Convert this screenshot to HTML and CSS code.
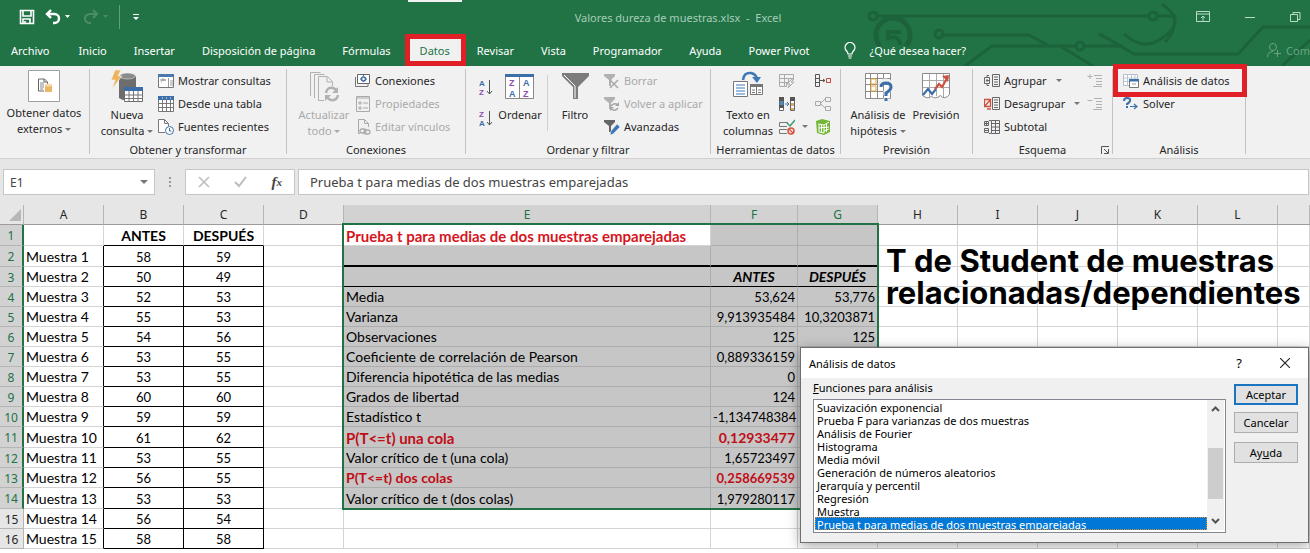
FILE: index.html
```html
<!doctype html>
<html lang="es">
  <head>
    <meta charset="UTF-8" />
    <meta name="viewport" content="width=device-width, initial-scale=1.0" />
    <title>Valores dureza de muestras.xlsx - Excel</title>
    <link rel="stylesheet" href="styles.css">
  </head>
  <body>
    <header class="top">
      <svg class="circuit" viewBox="0 0 450 66" width="450" height="66" fill="none" stroke="#1c633b" stroke-width="3">
        <path d="M17 16H289M297 16h18q0 18-10 26M81 35h88l22 12M105 66l27-20h85M223 46h38l-22-12M240 34l34 20h104l25-27h47M200 46l33 20M302 4q26 18 0 34-18 14-38-4M422 66l28-26" />
        <circle cx="13" cy="16" r="4" /><circle cx="293" cy="16" r="4" /><circle cx="79" cy="34" r="4" /><circle cx="220" cy="46" r="4" />
        <path d="M20 46a17 17 0 1 1 26 0" stroke-width="5" /><path d="M41 32H28v6q12-3 12 7" stroke-width="4" />
      </svg>
      <svg class="edge" viewBox="0 0 54 2" width="54" height="2"><path d="M0 0h54v2H0z" fill="#f1f1f1" /></svg>

      <div class="titlebar">
        <div class="quick">
          <button class="icon-btn" aria-label="Guardar"><svg width="16" height="16" viewBox="0 0 16 16" fill="none" stroke="#fff" stroke-width="1.6"><path d="M1.5 1.5h13v13h-13zM4 2v5h8V2M4 14v-4h7v4M6 14v-2" /></svg></button>
          <button class="icon-btn" aria-label="Deshacer"><svg width="27" height="16" viewBox="0 0 27 16" fill="none" stroke="#fff" stroke-width="2.4"><path d="M6 1L2 5l4 4M2.500 5h7a4.500 4.500 0 0 1 0 9H8" /><path d="M20 6h5l-2.500 3z" fill="#fff" stroke="none" /></svg></button>
          <button class="icon-btn" aria-label="Rehacer"><svg width="27" height="16" viewBox="0 0 27 16" fill="none" stroke="#4a8c66" stroke-width="2.200"><path d="M11 1l4 4-4 4M14.500 5h-7a4.500 4.500 0 0 0 0 9H9" /><path d="M21 6h5l-2.500 3z" fill="#4a8c66" stroke="none" /></svg></button>
          <span class="quick-line"></span>
          <button class="icon-btn" aria-label="Personalizar"><svg width="8" height="8" viewBox="0 0 8 8"><path d="M1 1h6v1H1zM1 4h6L4 7z" fill="#fff" /></svg></button>
        </div>
        <div class="doc-title">Valores dureza de muestras.xlsx &nbsp;-&nbsp; Excel</div>
        <div class="window-buttons">
          <button class="icon-btn" aria-label="Opciones de la cinta"><svg width="14" height="12" viewBox="0 0 14 12" fill="none" stroke="#b9dcc8"><path d="M.5.5h13v10H.5zM1 3h12M7 10V5M5 7l2-2 2 2" /></svg></button>
          <button class="icon-btn" aria-label="Minimizar"><svg width="12" height="12" viewBox="0 0 12 12"><path d="M1 6h10v1H1z" fill="#b9dcc8" /></svg></button>
          <button class="icon-btn" aria-label="Restaurar"><svg width="11" height="12" viewBox="0 0 11 12" fill="none" stroke="#b9dcc8"><path d="M.5 3.500h7v7h-7zM3 3V1.500h7v7H8" /></svg></button>
        </div>
      </div>

      <nav class="tabs">
        <a href="#" class="tab">Archivo</a>
        <a href="#" class="tab">Inicio</a>
        <a href="#" class="tab">Insertar</a>
        <a href="#" class="tab">Disposición de página</a>
        <a href="#" class="tab">Fórmulas</a>
        <a href="#" class="tab active">Datos</a>
        <a href="#" class="tab">Revisar</a>
        <a href="#" class="tab">Vista</a>
        <a href="#" class="tab">Programador</a>
        <a href="#" class="tab">Ayuda</a>
        <a href="#" class="tab">Power Pivot</a>
        <a href="#" class="tab tell-me"><svg width="12" height="17" viewBox="0 0 12 17" fill="none" stroke="#fff" stroke-width="1.200"><path d="M4 12c0-3-3-3-3-6.500a5 5 0 0 1 10 0C11 9 8 9 8 12zM4 14h4M4.500 16h3" /></svg>¿Qué desea hacer?</a>
        <a href="#" class="tab share"><svg width="14" height="14" viewBox="0 0 14 14" fill="none" stroke="#69a583"><circle cx="6" cy="4" r="3.500" /><path d="M.5 14q0-5 5.500-5.500M10.500 7v7M7 10.500h7" /></svg>Com</a>
      </nav>
    </header>

    <section class="ribbon">
      <div class="group group-external">
        <button class="big">
          <svg width="32" height="32" viewBox="0 0 32 32"><path d="M.5.5h31v31H.5z" fill="#fff" stroke="#a0a0a0" /><path d="M10.500 9h6l3 3v2M10.500 9v12H16M16 9v3h3" fill="none" stroke="#666" /><path d="M12 13h4M12 15h4M12 17h4M12 19h3" stroke="#888" /><path d="M17 15h7v7h-7z" fill="#eab765" /><ellipse cx="20.500" cy="15" rx="3.500" ry="1.500" fill="#f6dba9" /></svg>
          <span>Obtener datos<br>externos <i class="caret"></i></span>
        </button>
      </div>

      <div class="group group-transform">
        <div class="group-body">
          <button class="big">
            <svg width="32" height="34" viewBox="0 0 32 34"><path d="M8 6v22q4 3 9 2V17h8V6z" fill="#6d6d6d" /><ellipse cx="16.500" cy="6" rx="8" ry="3" fill="#8b8b8b" stroke="#f1f1f1" stroke-width=".5" /><path d="M4 0h6L7 6h4L1 19l3-9H0z" fill="#eeb35c" stroke="#f1f1f1" stroke-width=".7" /><path d="M13.500 17.500h18v14h-18z" fill="#fff" stroke="#6d6d6d" /><path d="M13 17h19v4H13z" fill="#3c6fa8" /><path d="M14 25h18M14 28.500h18M18 21v11M22.500 21v11M27 21v11" stroke="#777" /></svg>
            <span>Nueva<br>consulta <i class="caret"></i></span>
          </button>
          <div class="stack">
            <button class="cmd"><svg viewBox="0 0 16 16"><path d="M.5 1.500h15v13H.5z" fill="#fff" stroke="#777" /><path d="M0 1h16v3H0z" fill="#4a79ad" /><path d="M3 7h5M3 9h1M10.500 5v9M2 7h6M5 5v3M12 8h3M12 10h3M12 12h3" stroke="#999" /></svg>Mostrar consultas</button>
            <button class="cmd"><svg viewBox="0 0 16 16"><path d="M.5.5h15v15H.5z" fill="#fff" stroke="#777" /><path d="M0 0h16v4H0z" fill="#3c6fa8" /><path d="M1 7.500h15M1 11.500h15M4.500 4v12M8.500 4v12M12.500 4v12" stroke="#777" /><path d="M4 2h1M8 2h1M12 2h1" stroke="#fff" /></svg>Desde una tabla</button>
            <button class="cmd"><svg viewBox="0 0 16 16" fill="none" stroke="#777"><path d="M7 13.500H.5V.5h6l4 4V7M6.500.5v4h4" fill="#fff" /><circle cx="11.500" cy="11.500" r="4" fill="#fff" stroke="#3c6fa8" /><path d="M11.500 9v3h2" stroke="#3c6fa8" /></svg>Fuentes recientes</button>
          </div>
        </div>
        <div class="group-name">Obtener y transformar</div>
      </div>

      <div class="group group-connections">
        <div class="group-body">
          <button class="big" disabled>
            <svg width="32" height="34" viewBox="0 0 32 34" fill="none" stroke="#b1b1b1"><path d="M2.500 26V2.500h10M6.500 28V4.500h10M10.500 30.500V6.500h9l5 5V16M19 7v5h5M10.500 30.500H16" /><path d="M18 23q1-6 7-5 3 1 4 3M30 25q-1 6-7 5-3-1-4-3" stroke-width="2.500" /><path d="M30 17v6h-6zM17 31v-6h6z" fill="#b1b1b1" stroke="none" /></svg>
            <span>Actualizar<br>todo <i class="caret"></i></span>
          </button>
          <div class="stack">
            <button class="cmd"><svg viewBox="0 0 16 16"><path d="M2.500 1.500h12v9h-12z" fill="#fff" stroke="#666" /><path d="M.5 4v9.500H13V11" fill="none" stroke="#777" /><circle cx="8.500" cy="6" r="2" fill="none" stroke="#3c6fa8" stroke-width="1.500" /><path d="M8.500 2v8M5 6h7" stroke="#3c6fa8" stroke-dasharray="1 5" /></svg>Conexiones</button>
            <button class="cmd" disabled><svg viewBox="0 0 16 16" fill="none" stroke="#aaa"><path d="M1.500.500h13v15h-13zM1.500 2h13M4 6h2v2H4zM4 11h2v2H4zM8 7h5M8 12h5" /></svg>Propiedades</button>
            <button class="cmd" disabled><svg viewBox="0 0 16 16" fill="none" stroke="#aaa"><path d="M5 14.500H3.500V.5h6l4 4V8M9.500.5v4h4" /><rect x="5" y="10" width="6" height="4" rx="2" stroke-width="1.300" /><rect x="9" y="11" width="6" height="4" rx="2" stroke-width="1.300" /></svg>Editar vínculos</button>
          </div>
        </div>
        <div class="group-name">Conexiones</div>
      </div>

      <div class="group group-sort">
        <div class="group-body">
          <div class="sort-stack">
            <button class="icon-btn" aria-label="Ordenar de A a Z"><svg class="letters" width="15" height="20" viewBox="0 0 15 20"><g font-size="8"><text x="1" y="9" fill="#3c6fa8">A</text><text x="1" y="18" fill="#8b4fae">Z</text></g><path d="M11.500 3v14M9 14l2.500 3 2.500-3" fill="none" stroke="#555" /></svg></button>
            <button class="icon-btn" aria-label="Ordenar de Z a A"><svg class="letters" width="15" height="20" viewBox="0 0 15 20"><g font-size="8"><text x="1" y="9" fill="#8b4fae">Z</text><text x="1" y="18" fill="#3c6fa8">A</text></g><path d="M11.500 3v14M9 14l2.500 3 2.500-3" fill="none" stroke="#555" /></svg></button>
          </div>
          <button class="big">
            <svg class="letters" width="30" height="34" viewBox="0 0 30 34"><path d="M.5 4.500h28v24H.5z" fill="#fff" stroke="#888" /><path d="M0 4h29v3H0z" fill="#3c6fa8" /><path d="M14.500 7v21" stroke="#888" /><g font-size="9"><text x="4" y="16" fill="#8b4fae">Z</text><text x="4" y="27" fill="#3c6fa8">A</text><text x="18" y="16" fill="#3c6fa8">A</text><text x="18" y="27" fill="#8b4fae">Z</text></g></svg>
            <span>Ordenar</span>
          </button>
          <span class="inner-line"></span>
          <button class="big">
            <svg width="32" height="34" viewBox="0 0 32 34"><path d="M3 3h27v3L19 17v12h-5V17L3 6z" fill="#7c7c7c" /><path d="M5 5l11 11v12" fill="none" stroke="#fff" /></svg>
            <span>Filtro</span>
          </button>
          <div class="stack">
            <button class="cmd" disabled><svg viewBox="0 0 16 16"><path d="M0 1h11v2L7 7v6H5V7L0 3z" fill="#b1b1b1" /><path d="M6 7l8 8M14 7l-8 8" stroke="#a5a5a5" stroke-width="1.400" /></svg>Borrar</button>
            <button class="cmd" disabled><svg viewBox="0 0 16 16"><path d="M0 1h11v2L7 7v6H5V7L0 3z" fill="#b1b1b1" /><path d="M7 10q3-4 7-1M14 12q-3 4-7 1" fill="none" stroke="#a5a5a5" stroke-width="1.500" /><path d="M15 6v4h-4zM6 15v-4h4z" fill="#a5a5a5" /></svg>Volver a aplicar</button>
            <button class="cmd"><svg viewBox="0 0 16 16"><path d="M0 1h11v2L7 7v6H5V7L0 3z" fill="#666" /><path d="M13 5l3 3-7 7-3 1 1-4z" fill="#3c78b8" stroke="#f1f1f1" stroke-width=".5" /></svg>Avanzadas</button>
          </div>
        </div>
        <div class="group-name">Ordenar y filtrar</div>
      </div>

      <div class="group group-tools">
        <div class="group-body">
          <button class="big">
            <svg width="32" height="34" viewBox="0 0 32 34"><path d="M11 10q1-8 8-7 5 1 6 6" fill="none" stroke="#3c78b8" stroke-width="2.500" /><path d="M20 7h9l-4 6z" fill="#3c78b8" /><path d="M1.500 11.500h14v15h-14z" fill="#fff" stroke="#777" /><path d="M4 15h9M4 18h9M4 21h9M4 24h9" stroke="#3c78b8" /><path d="M18.500 14.500h12v10h-12z" fill="#fff" stroke="#777" /><path d="M18 14h13v3H18z" fill="#777" /><path d="M24.500 17v8M20 20h3M20 22.500h3M26 20h3M26 22.500h3" stroke="#777" /></svg>
            <span>Texto en<br>columnas</span>
          </button>
          <div class="stack tool-icons">
            <button class="cmd" aria-label="Relleno rápido"><svg viewBox="0 0 16 16" fill="none" stroke="#aaa"><path d="M.5 1.500h14v4H.5zM.5 5.500h9v4h-9zM.5 9.500h7v4h-7zM5.500 1v13" /><path d="M13 6l-5 5h3l-2 4 6-6h-3l3-3z" fill="#f1f1f1" /></svg></button>
            <button class="cmd" aria-label="Quitar duplicados"><svg viewBox="0 0 16 16"><path d="M.5 1.500h4v13h-4zM11.500 1.500h4v13h-4z" fill="#fff" stroke="#666" /><path d="M0 1h5v4H0zM0 9h5v3H0z" fill="#555" /><path d="M1 5h3v4H1z" fill="#4b8bbf" /><path d="M11 1h5v4h-5z" fill="#555" /><path d="M12 7h3v3h-3zM12 12h3v2h-3z" fill="#d9a866" /><path d="M6 8h4M8 6l2 2-2 2" fill="none" stroke="#3c78b8" /></svg></button>
            <button class="cmd" aria-label="Validación de datos"><svg viewBox="0 0 16 16" fill="none"><path d="M9 3.500H.5v4H8M8 10.500H.5v4H8" stroke="#777" /><path d="M8 4l3 3 5-6" stroke="#3d9e77" stroke-width="1.500" /><circle cx="12" cy="12" r="3" stroke="#d9503c" stroke-width="1.500" /><path d="M10 10l4 4" stroke="#d9503c" stroke-width="1.300" /></svg><i class="caret"></i></button>
          </div>
          <div class="stack">
            <button class="cmd" aria-label="Consolidar"><svg viewBox="0 0 16 16" fill="none" stroke="#555"><path d="M.5 1.500h4v12h-4zM.5 5.500h4M.5 9.500h4M5 7.500h5M8 6l2 1.500L8 9" /><path d="M11.500 5.500h4v4h-4z" stroke="#c9473a" /></svg></button>
            <button class="cmd" aria-label="Relaciones"><svg viewBox="0 0 16 16" fill="none" stroke="#aaa"><path d="M.5 5.500h5v4h-5zM10.500 1.500h5v4h-5zM10.500 10.500h5v4h-5zM6 7l4-4M6 8l4 4" /></svg></button>
            <button class="cmd" aria-label="Administrar modelo de datos"><svg viewBox="0 0 16 16"><path d="M1 2l6-2 8 2v11l-6 3-7-2z" fill="#76b636" /><path d="M3 5l6 1 5-3M4 6v7l5 1V6M4 9l10-1M6.500 6v7M11.500 5v8M9 12l5-2" fill="none" stroke="#fff" /></svg></button>
          </div>
        </div>
        <div class="group-name">Herramientas de datos</div>
      </div>

      <div class="group group-forecast">
        <div class="group-body">
          <button class="big">
            <svg width="32" height="34" viewBox="0 0 32 34"><path d="M3.500 3.500h25v25h-25z" fill="#fff" /><path d="M3.500 3.500h25v25h-25zM8.500 3v26M15.500 3v26M21.500 3v26M3 8.500h26M3 14.500h26M3 21.500h26" fill="none" stroke="#8b8b8b" /><path d="M9 9h5v5H9zM9 16h5v5H9z" fill="#fff" stroke="#e6a83f" /><path d="M18 15q1-4 6-4 6 1 5 6-1 3-5 5v3M24 28v3" fill="none" stroke="#f1f1f1" stroke-width="5" /><path d="M19 17q0-4 5-4 5 0 5 4 0 3-5 6v3M24 28v3" fill="none" stroke="#3c6fa8" stroke-width="3" /></svg>
            <span>Análisis de<br>hipótesis <i class="caret"></i></span>
          </button>
          <button class="big">
            <svg width="32" height="34" viewBox="0 0 32 34"><path d="M2.500 3.500h27v21q-5 6-9 1-5 4-9 1-4 3-9-1z" fill="#fff" stroke="#8b8b8b" /><path d="M9.500 4v23M16.500 4v22M23.500 4v23M3 10.500h26M3 17.500h26" stroke="#aaa" /><path d="M3 25l5-6 4 5 4-5" fill="none" stroke="#3c6fa8" stroke-width="2.200" /><path d="M15 19l4-5 3 3 6-10" fill="none" stroke="#cf5240" stroke-width="2.200" /><path d="M22 6l7-1-1 7z" fill="#cf5240" /></svg>
            <span>Previsión</span>
          </button>
        </div>
        <div class="group-name">Previsión</div>
      </div>

      <div class="group group-outline">
        <div class="group-body">
          <div class="stack">
            <button class="cmd"><svg viewBox="0 0 16 16" fill="none" stroke="#666"><path d="M8.500 1.500h7v12h-7zM10 4h4M10 6.500h4M10 9h4M10 11.500h4M.5 4.500h5v6h-5zM2 7.500h3M3 6v3M5 2.500H3v2M5 12.500H3v-2" /></svg>Agrupar <i class="caret wide"></i></button>
            <button class="cmd"><svg viewBox="0 0 16 16" fill="none" stroke="#666"><path d="M8.500 1.500h7v12h-7zM10 4h4M10 6.500h4M10 9h4M10 11.500h4" /><path d="M.5 3.500h6v7h-6zM1 10l6-7M3 13h4" stroke="#cf5240" stroke-width="1.300" /></svg>Desagrupar <i class="caret wide"></i></button>
            <button class="cmd"><svg viewBox="0 0 16 16" fill="none" stroke="#666"><path d="M7.500 1.500h8v13h-8zM11.500 1v14M8 4.500h8M8 8h8M8 11.500h8M.5 2.500h4v4h-4zM.5 9.500h4v4h-4zM2.500 3v3M1 4.500h3M1 11.500h3M5 1.500h2M5 14.500h2" /></svg>Subtotal</button>
          </div>
          <div class="stack detail-icons">
            <button class="cmd" aria-label="Mostrar detalle"><svg viewBox="0 0 16 16" fill="none" stroke="#b1b1b1"><path d="M3 1v5M.5 3.500h5M7 2.500h8M9 5.500h6M9 8.500h6M9 11.500h6M6 13.500h9" /></svg></button>
            <button class="cmd" aria-label="Ocultar detalle"><svg viewBox="0 0 16 16" fill="none" stroke="#b1b1b1"><path d="M.5 4.500h5M7 2.500h8M9 5.500h6M9 8.500h6M9 11.500h6M6 13.500h9" /></svg></button>
          </div>
        </div>
        <div class="group-name">Esquema</div>
        <button class="launcher icon-btn" aria-label="Más opciones de esquema"><svg width="8" height="8" viewBox="0 0 8 8" fill="none" stroke="#555"><path d="M.5 8V.500H8M3 3l4 4M7.500 3v4.500H3" /></svg></button>
      </div>

      <div class="group group-analysis">
        <div class="group-body">
          <div class="stack">
            <button class="cmd highlight"><svg viewBox="0 0 16 16" fill="none" stroke="#999"><path d="M.5 1.500h14v11H.5z" fill="#fff" stroke="#b5bcc4" /><path d="M1 5h14M1 8.500h14M4.500 1v12M8.500 1v12M12 1v12" stroke="#b9c6d4" /><path d="M6.500 6.500h9v8h-9z" fill="#fff" stroke="#777" /><path d="M6 6h10v2.500H6z" fill="#3c6fa8" stroke="none" /><path d="M9 11h4" /></svg>Análisis de datos</button>
            <button class="cmd"><svg viewBox="0 0 16 16" fill="none" stroke="#3c6fa8"><path d="M1 5q0-3 3-3 4 0 3 3-1 2-3 3v1M4 10v2" stroke-width="2" /><path d="M7 10.500h7M11 8l3 2.500-3 2.500" stroke-width="1.200" /></svg>Solver</button>
          </div>
        </div>
        <div class="group-name">Análisis</div>
      </div>
    </section>

    <section class="formula-row">
      <div class="name-box">
        <input type="text" value="E1" aria-label="Cuadro de nombres">
        <i class="caret dark"></i>
      </div>
      <span class="grip"></span>
      <div class="formula-buttons">
        <button class="icon-btn" aria-label="Cancelar"><svg width="12" height="12" viewBox="0 0 12 12"><path d="M1 1l10 10M11 1L1 11" stroke="#bdbdbd" stroke-width="1.600" /></svg></button>
        <button class="icon-btn" aria-label="Introducir"><svg width="13" height="12" viewBox="0 0 13 12"><path d="M1 6l4 4 7-9" fill="none" stroke="#bdbdbd" stroke-width="2" /></svg></button>
        <button class="icon-btn fx" aria-label="Insertar función">f<small>x</small></button>
      </div>
      <input class="formula" type="text" value="Prueba t para medias de dos muestras emparejadas" aria-label="Barra de fórmulas">
    </section>

    <main class="sheet">
      <table class="grid">
        <colgroup>
          <col class="col-head"><col class="col"><col class="col"><col class="col"><col class="col">
          <col class="col-e"><col class="col-f"><col class="col"><col class="col"><col class="col"><col class="col"><col class="col"><col class="col"><col>
        </colgroup>
        <thead>
          <tr>
            <th class="corner"><svg width="13" height="13" viewBox="0 0 13 13"><path d="M13 1v12H1z" fill="#b7b7b7" /></svg></th>
            <th>A</th><th>B</th><th>C</th><th>D</th>
            <th class="picked">E</th><th class="picked">F</th><th class="picked">G</th>
            <th>H</th><th>I</th><th>J</th><th>K</th><th>L</th><th></th>
          </tr>
        </thead>
        <tbody>
          <tr class="tall"><th class="picked">1</th><td></td><td class="title">ANTES</td><td class="title">DESPUÉS</td><td></td><td class="main-cell">Prueba t para medias de dos muestras emparejadas</td><td class="sel"></td><td class="sel"></td><td></td><td></td><td></td><td></td><td></td><td></td></tr>
          <tr class="tall thick"><th class="picked">2</th><td>Muestra 1</td><td class="box">58</td><td class="box">59</td><td></td><td class="sel"></td><td class="sel"></td><td class="sel"></td><td></td><td></td><td></td><td></td><td></td><td></td></tr>
          <tr class="thin"><th class="picked">3</th><td>Muestra 2</td><td class="box">50</td><td class="box">49</td><td></td><td class="sel"></td><td class="sel head">ANTES</td><td class="sel head">DESPUÉS</td><td></td><td></td><td></td><td></td><td></td><td></td></tr>
          <tr><th class="picked">4</th><td>Muestra 3</td><td class="box">52</td><td class="box">53</td><td></td><td class="sel">Media</td><td class="sel num">53,624</td><td class="sel num">53,776</td><td></td><td></td><td></td><td></td><td></td><td></td></tr>
          <tr><th class="picked">5</th><td>Muestra 4</td><td class="box">55</td><td class="box">53</td><td></td><td class="sel">Varianza</td><td class="sel num">9,913935484</td><td class="sel num">10,3203871</td><td></td><td></td><td></td><td></td><td></td><td></td></tr>
          <tr><th class="picked">6</th><td>Muestra 5</td><td class="box">54</td><td class="box">56</td><td></td><td class="sel">Observaciones</td><td class="sel num">125</td><td class="sel num">125</td><td></td><td></td><td></td><td></td><td></td><td></td></tr>
          <tr><th class="picked">7</th><td>Muestra 6</td><td class="box">53</td><td class="box">55</td><td></td><td class="sel">Coeficiente de correlación de Pearson</td><td class="sel num">0,889336159</td><td class="sel"></td><td></td><td></td><td></td><td></td><td></td><td></td></tr>
          <tr><th class="picked">8</th><td>Muestra 7</td><td class="box">53</td><td class="box">55</td><td></td><td class="sel">Diferencia hipotética de las medias</td><td class="sel num">0</td><td class="sel"></td><td></td><td></td><td></td><td></td><td></td><td></td></tr>
          <tr><th class="picked">9</th><td>Muestra 8</td><td class="box">60</td><td class="box">60</td><td></td><td class="sel">Grados de libertad</td><td class="sel num">124</td><td class="sel"></td><td></td><td></td><td></td><td></td><td></td><td></td></tr>
          <tr><th class="picked">10</th><td>Muestra 9</td><td class="box">59</td><td class="box">59</td><td></td><td class="sel">Estadístico t</td><td class="sel num">-1,134748384</td><td class="sel"></td><td></td><td></td><td></td><td></td><td></td><td></td></tr>
          <tr class="tall"><th class="picked">11</th><td>Muestra 10</td><td class="box">61</td><td class="box">62</td><td></td><td class="sel result large">P(T&lt;=t) una cola</td><td class="sel num result large">0,12933477</td><td class="sel"></td><td></td><td></td><td></td><td></td><td></td><td></td></tr>
          <tr><th class="picked">12</th><td>Muestra 11</td><td class="box">53</td><td class="box">55</td><td></td><td class="sel">Valor crítico de t (una cola)</td><td class="sel num">1,65723497</td><td class="sel"></td><td></td><td></td><td></td><td></td><td></td><td></td></tr>
          <tr><th class="picked">13</th><td>Muestra 12</td><td class="box">56</td><td class="box">55</td><td></td><td class="sel result">P(T&lt;=t) dos colas</td><td class="sel num result">0,258669539</td><td class="sel"></td><td></td><td></td><td></td><td></td><td></td><td></td></tr>
          <tr class="tall"><th class="picked">14</th><td>Muestra 13</td><td class="box">53</td><td class="box">53</td><td></td><td class="sel">Valor crítico de t (dos colas)</td><td class="sel num">1,979280117</td><td class="sel"></td><td></td><td></td><td></td><td></td><td></td><td></td></tr>
          <tr><th>15</th><td>Muestra 14</td><td class="box">56</td><td class="box">54</td><td></td><td></td><td></td><td></td><td></td><td></td><td></td><td></td><td></td><td></td></tr>
          <tr><th>16</th><td>Muestra 15</td><td class="box">58</td><td class="box">58</td><td></td><td></td><td></td><td></td><td></td><td></td><td></td><td></td><td></td><td></td></tr>
        </tbody>
      </table>

      <div class="selection"></div>

      <h1 class="headline">T de Student de muestras<br>relacionadas/dependientes</h1>

      <form class="dialog">
        <div class="dialog-title">
          <span>Análisis de datos</span>
          <button type="button" class="icon-btn help" aria-label="Ayuda del cuadro">?</button>
          <button type="button" class="icon-btn" aria-label="Cerrar"><svg width="10" height="10" viewBox="0 0 10 10"><path d="M0 0l10 10M10 0L0 10" stroke="#222" stroke-width="1.100" /></svg></button>
        </div>
        <div class="dialog-body">
          <div class="functions">
            <label for="functions"><u>F</u>unciones para análisis</label>
            <div class="list-box">
              <select id="functions" size="10">
                <option>Suavización exponencial</option>
                <option>Prueba F para varianzas de dos muestras</option>
                <option>Análisis de Fourier</option>
                <option>Histograma</option>
                <option>Media móvil</option>
                <option>Generación de números aleatorios</option>
                <option>Jerarquía y percentil</option>
                <option>Regresión</option>
                <option>Muestra</option>
                <option selected>Prueba t para medias de dos muestras emparejadas</option>
              </select>
              <div class="scrollbar">
                <svg width="9" height="6" viewBox="0 0 9 6"><path d="M1 5l3.500-3.500L8 5" fill="none" stroke="#555" stroke-width="2" /></svg>
                <span class="thumb"></span>
                <svg width="9" height="6" viewBox="0 0 9 6"><path d="M1 1l3.500 3.500L8 1" fill="none" stroke="#555" stroke-width="2" /></svg>
              </div>
            </div>
          </div>
          <div class="dialog-buttons">
            <button type="button" class="default">Aceptar</button>
            <button type="button">Cancelar</button>
            <button type="button" class="apart">Ay<u>u</u>da</button>
          </div>
        </div>
      </form>
    </main>
  </body>
</html>
```
FILE: styles.css
```css
* {
  margin: 0;
  padding: 0;
  box-sizing: border-box;
}

body {
  font-family: 'Noto Sans', sans-serif;
  font-size: 11px;
  color: #262626;
  background: #fff;
  overflow: hidden;
}

button,
input,
select {
  font: inherit;
  color: inherit;
  background: none;
  border: none;
}

svg {
  display: block;
  flex: none;
}

.icon-btn {
  display: flex;
  align-items: center;
  justify-content: center;
}

.caret {
  display: inline-block;
  flex: none;
  border: 3px solid transparent;
  border-top-color: #777;
  border-bottom: 0;
  vertical-align: 2px;
}

/* Title bar and tabs */
.top {
  position: relative;
  background: #217346;
  color: #fff;
  overflow: hidden;
}

.circuit {
  position: absolute;
  top: 0;
  right: 0;
}

.edge {
  position: absolute;
  top: 0;
  left: 408px;
}

.titlebar {
  position: relative;
  display: flex;
  align-items: center;
  height: 34px;
  padding: 0 9px 0 19px;
}

.quick {
  display: flex;
  align-items: center;
  flex: 1;
  gap: 10px;
}

.quick-line {
  width: 1px;
  height: 24px;
  background: #5f9f7b;
}

.quick .quick-line + .icon-btn {
  margin-left: 2px;
}

.doc-title {
  margin-left: 36px;
  color: #a6cdb6;
}

.window-buttons {
  display: flex;
  flex: 1;
  justify-content: flex-end;
  gap: 34px;
}

.tabs {
  position: relative;
  display: flex;
  height: 32px;
}

.tab {
  display: flex;
  align-items: center;
  padding: 0 14px 0 13px;
  color: #fff;
  text-decoration: none;
  white-space: nowrap;
}

.tab:first-child {
  padding: 0 16px 0 11px;
}

.tab.active {
  margin-right: -2px;
  padding: 0 11px 0 10px;
  color: #217346;
  background: #f1f1f1;
  border: 5px solid #e11f27;
}

.tab.tell-me {
  gap: 14px;
  padding-left: 20px;
}

.tab.share {
  gap: 5px;
  margin-left: auto;
  padding: 0;
  color: #69a583;
}

/* Ribbon */
.ribbon {
  display: flex;
  height: 93px;
  padding-top: 3px;
  background: #f1f1f1;
  border-bottom: 1px solid #d0d0d0;
}

.group {
  position: relative;
  display: flex;
  flex-direction: column;
  flex: none;
  height: 85px;
  border-right: 1px solid #c3c3c3;
}

.group-external { width: 90px; }
.group-transform { width: 197px; }
.group-connections { width: 179px; }
.group-sort { width: 245px; }
.group-tools { width: 130px; }
.group-forecast { width: 132px; }
.group-outline { width: 140px; }
.group-analysis { width: 133px; }

.group-body {
  display: flex;
  flex: 1;
  padding-left: 8px;
}

.group-name {
  height: 16px;
  margin-bottom: -4px;
  line-height: 16px;
  text-align: center;
}

.group-name,
.big,
.cmd {
  white-space: nowrap;
}

.big {
  display: flex;
  flex-direction: column;
  align-items: center;
  gap: 3px;
  width: 58px;
  height: 69px;
  padding-top: 1px;
  line-height: 16px;
}

.group-external .big {
  width: 88px;
}

.stack {
  display: flex;
  flex-direction: column;
  padding-left: 2px;
}

.cmd {
  display: flex;
  align-items: center;
  gap: 4px;
  height: 23px;
}

.cmd svg {
  width: 16px;
  height: 16px;
}

.cmd .wide {
  margin-left: 5px;
}

.big:disabled,
.cmd:disabled {
  color: #a9a9a9;
}

.big:disabled .caret {
  border-top-color: #a9a9a9;
}

.letters {
  font-family: 'Liberation Sans', sans-serif;
  font-weight: 700;
}

.sort-stack {
  display: flex;
  flex-direction: column;
  gap: 11px;
  padding: 8px 0 0 4px;
}

.group-sort .big {
  width: 54px;
}

.inner-line {
  width: 1px;
  height: 56px;
  margin-top: 6px;
  background: #d0d0d0;
}

.tool-icons {
  width: 36px;
}

.tool-icons .caret {
  margin-left: 3px;
}

.group-outline .group-body {
  padding-left: 9px;
}

.detail-icons {
  margin-left: auto;
  padding-right: 9px;
}

.launcher {
  position: absolute;
  right: 3px;
  bottom: 0;
}

.highlight {
  outline: 5px solid #e11f27;
}

.group-analysis .group-body {
  padding-left: 5px;
}

.group-analysis .stack {
  padding: 0;
}

.group-analysis .cmd {
  width: 124px;
  padding-left: 5px;
}

/* Formula bar */
.formula-row {
  display: flex;
  height: 46px;
  padding: 10px 1px 10px 3px;
  background: #e6e6e6;
  font-size: 13px;
  color: #444;
}

.name-box,
.formula-buttons,
.formula {
  background: #fff;
  border: 1px solid #c6c6c6;
}

.name-box {
  display: flex;
  align-items: center;
  width: 152px;
  padding: 0 6px;
}

.name-box input {
  flex: 1;
  min-width: 0;
  font-size: 12px;
}

.caret.dark {
  border-width: 4px;
  border-bottom: 0;
}

.grip {
  width: 2px;
  height: 11px;
  margin: 8px 14px;
  background: repeating-linear-gradient(#999 0 2px, transparent 2px 4px);
}

.formula-buttons {
  display: flex;
  align-items: center;
  justify-content: space-between;
  width: 110px;
  padding: 0 12px;
}

.fx {
  font: italic 700 15px 'Liberation Serif', serif;
}

.fx small {
  font-size: 11px;
}

.formula {
  flex: 1;
  margin-left: 3px;
  padding: 0 11px;
}

/* Sheet */
.sheet {
  position: relative;
}

.grid {
  width: 100%;
  table-layout: fixed;
  border-collapse: separate;
  border-spacing: 0;
  font-family: Lato, sans-serif;
  font-size: 14px;
  line-height: 16px;
  color: #000;
}

.col-head { width: 24px; }
.col { width: 80px; }
.col-e { width: 367px; }
.col-f { width: 87px; }

.grid td,
.grid th {
  height: 20px;
  border-right: 1px solid #d4d4d4;
  border-bottom: 1px solid #d4d4d4;
  white-space: nowrap;
  overflow: hidden;
}

.grid td {
  padding: 1px 2px 0;
}

.grid th {
  background: #e6e6e6;
  border-color: #b5b5b5;
  color: #262626;
  font-family: 'Noto Sans', sans-serif;
  font-size: 12px;
  font-weight: 400;
}

.grid thead th {
  border-bottom-color: #9b9b9b;
}

.grid tbody th {
  padding-top: 2px;
}

.grid .tall td,
.grid .tall th {
  height: 21px;
}

.grid .corner svg {
  margin-left: 8px;
}

.grid th.picked {
  background: #d2d2d2;
  color: #217346;
}

.grid tbody th.picked {
  border-right: 2px solid #217346;
}

.grid .title {
  font-weight: 700;
  text-align: center;
  border-bottom-color: #000;
}

.grid .box {
  font-size: 13px;
  text-align: center;
  border-color: #000;
}

.grid td:has(+ .box):not(.box) {
  border-right-color: #000;
}

.grid .sel {
  background: #c6c6c6;
  border-color: #adadad;
}

.grid .thick .sel {
  border-bottom: 2px solid #000;
}

.grid .thin .sel {
  border-bottom-color: #000;
}

.grid .main-cell {
  font-size: 15px;
  font-weight: 700;
  color: #d6141c;
}

.grid .num {
  font-size: 13px;
  text-align: right;
}

.grid .head {
  font-style: italic;
  font-weight: 700;
  text-align: center;
}

.grid .result {
  font-weight: 700;
  color: #c00d16;
}

.grid .large {
  font-size: 15px;
}

.grid .num.large {
  font-size: 14px;
}

/* Marquee round E1:G14 */
.selection {
  position: absolute;
  top: 18px;
  left: 342px;
  width: 537px;
  height: 287px;
  border: 2px solid #217346;
}

.headline {
  position: absolute;
  top: 40px;
  left: 886px;
  font-family: Inter, sans-serif;
  font-size: 31px;
  font-weight: 700;
  line-height: 32px;
  color: #000;
}

/* Data analysis dialog */
.dialog {
  position: absolute;
  top: 142px;
  right: 1px;
  width: 509px;
  background: #f0f0f0;
  border: 1px solid #6e6e6e;
  box-shadow: 0 3px 12px rgba(0, 0, 0, 0.35);
  color: #000;
}

.dialog-title {
  display: flex;
  align-items: center;
  gap: 38px;
  height: 30px;
  padding: 0 18px 0 8px;
  background: #fff;
}

.dialog-title span {
  flex: 1;
}

.help {
  font-size: 13px;
}

.dialog-body {
  display: flex;
  gap: 8px;
  padding: 2px 10px 9px 12px;
}

.functions {
  flex: 1;
}

.functions label {
  display: block;
  height: 19px;
  line-height: 16px;
}

.list-box {
  display: flex;
  height: 134px;
  padding: 0 1px 2px;
  background: #fff;
  border: 1px solid #828790;
}

.list-box select {
  flex: 1;
  min-width: 0;
  height: 130px;
  overflow: hidden;
  scrollbar-width: none;
  outline: none;
}

.list-box option {
  height: 13px;
  min-height: 13px;
  padding: 0 2px;
  line-height: 13px;
}

.list-box option:checked {
  color: #fff;
  background: #0078d7 linear-gradient(#0078d7, #0078d7);
  outline: 1px dotted #d98c3a;
  outline-offset: -1px;
}

.scrollbar {
  display: flex;
  flex-direction: column;
  align-items: center;
  justify-content: space-between;
  width: 17px;
  padding: 6px 0;
  background: #f0f0f0;
}

.thumb {
  width: 15px;
  height: 51px;
  margin-top: 16px;
  background: #cdcdcd;
}

.dialog-buttons {
  display: flex;
  flex-direction: column;
  gap: 7px;
  padding-top: 4px;
}

.dialog-buttons button {
  width: 64px;
  height: 21px;
  background: #e1e1e1;
  border: 1px solid #adadad;
}

.dialog-buttons .default {
  border: 2px solid #1a74c0;
}

.dialog-buttons .apart {
  margin-top: 2px;
}
```
